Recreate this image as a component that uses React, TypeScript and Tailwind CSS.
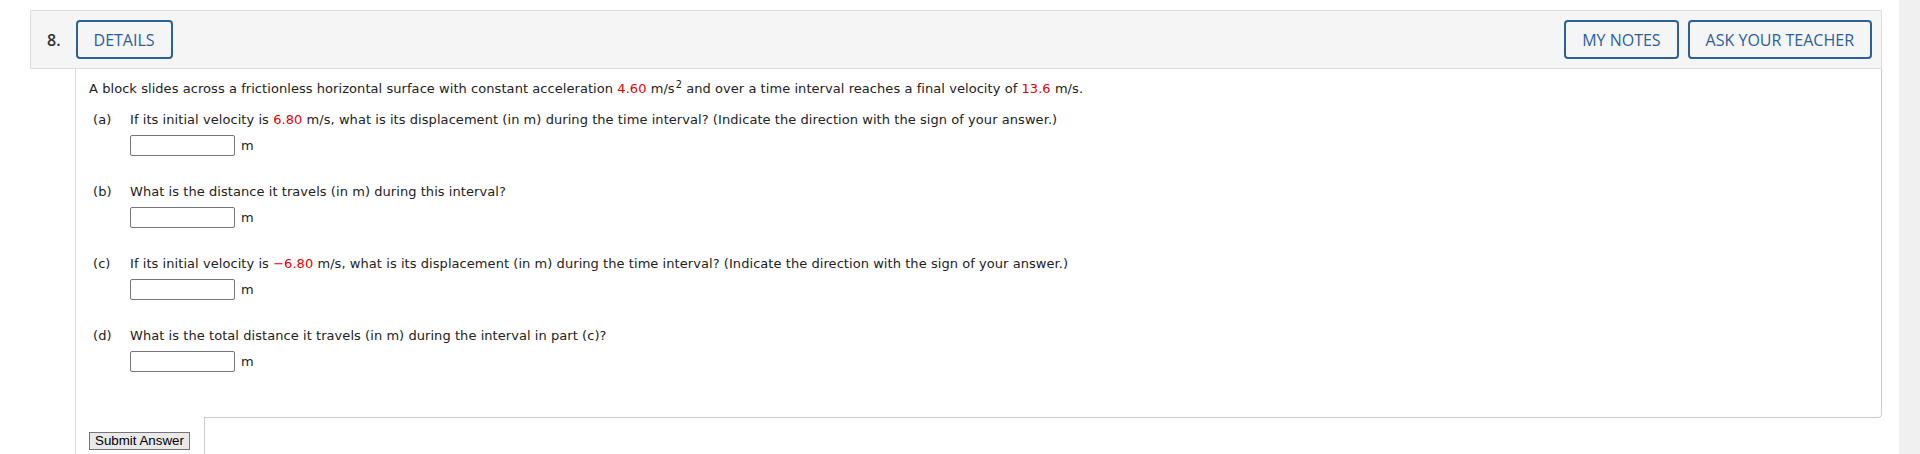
import React from "react";

const parts = [
  {
    label: "(a)",
    text: (
      <>
        If its initial velocity is <span className="text-[#e60000]">6.80</span> m/s, what is its displacement (in m)
        during the time interval? (Indicate the direction with the sign of your answer.)
      </>
    ),
  },
  { label: "(b)", text: <>What is the distance it travels (in m) during this interval?</> },
  {
    label: "(c)",
    text: (
      <>
        If its initial velocity is <span className="text-[#e60000]">&minus;6.80</span> m/s, what is its displacement (in
        m) during the time interval? (Indicate the direction with the sign of your answer.)
      </>
    ),
  },
  { label: "(d)", text: <>What is the total distance it travels (in m) during the interval in part (c)?</> },
];

function HeaderButton({ children }: { children: React.ReactNode }) {
  return (
    <button className="h-[39px] px-[16px] border-2 border-[#2a619a] rounded-[4px] text-[16px] text-[#2a619a] font-['Open_Sans',sans-serif] leading-none">
      {children}
    </button>
  );
}

function Part({ label, text }: { label: string; text: React.ReactNode }) {
  return (
    <div className="flex flex-col">
      <div className="flex leading-[16px] pl-[4px]">
        <span className="w-[37px] shrink-0">{label}</span>
        <span>{text}</span>
      </div>
      <div className="flex items-center mt-[7px] ml-[41px]">
        <input className="w-[105px] h-[21px] border border-[#767676] rounded-[2px] bg-white" />
        <span className="ml-[6px]">m</span>
      </div>
    </div>
  );
}

export default function App() {
  return (
    <div className="w-[1920px] h-[454px] flex bg-white overflow-hidden">
      <div className="flex-1 flex flex-col pl-[30px] pr-[17px] pt-[10px]">
        <div className="h-[59px] shrink-0 flex items-center border border-[#dddddd] bg-[#f5f5f5] pl-[16px] pr-[9px]">
          <span className="text-[16px] font-semibold text-[#333] font-['Open_Sans',sans-serif]">8.</span>
          <div className="ml-[15px]">
            <HeaderButton>DETAILS</HeaderButton>
          </div>
          <div className="ml-auto flex gap-[9px]">
            <HeaderButton>MY NOTES</HeaderButton>
            <HeaderButton>ASK YOUR TEACHER</HeaderButton>
          </div>
        </div>

        <div className="flex-1 flex flex-col ml-[45px] border-l border-[#dddddd] text-[13px] tracking-[0.06px] text-[#222] font-['DejaVu_Sans',sans-serif]">
          <div className="border-r border-b border-[#cccccc] rounded-br-[4px] pl-[13px] pt-[12px] pb-[45px]">
            <p className="leading-[16px]">
              A block slides across a frictionless horizontal surface with constant acceleration{" "}
              <span className="text-[#e60000]">4.60</span> m/s<sup className="ml-px">2</sup> and over a time interval
              reaches a final velocity of <span className="text-[#e60000]">13.6</span> m/s.
            </p>
            <div className="flex flex-col gap-[28px] mt-[15px]">
              {parts.map((p) => (
                <Part key={p.label} label={p.label} text={p.text} />
              ))}
            </div>
          </div>
          <div className="flex-1 flex">
            <div className="relative -mt-px w-[128px] bg-white pl-[13px] pt-[14px]">
              <button className="h-[18px] px-[5px] border border-[#767676] bg-[#e9e9e9] text-[13.33px] leading-none tracking-normal text-black font-['Liberation_Sans',Arial,sans-serif]">
                Submit Answer
              </button>
            </div>
            <div className="flex-1 border-l border-[#cccccc]" />
          </div>
        </div>
      </div>
      <div className="w-[21px] bg-[#f0f0f0]" />
    </div>
  );
}
